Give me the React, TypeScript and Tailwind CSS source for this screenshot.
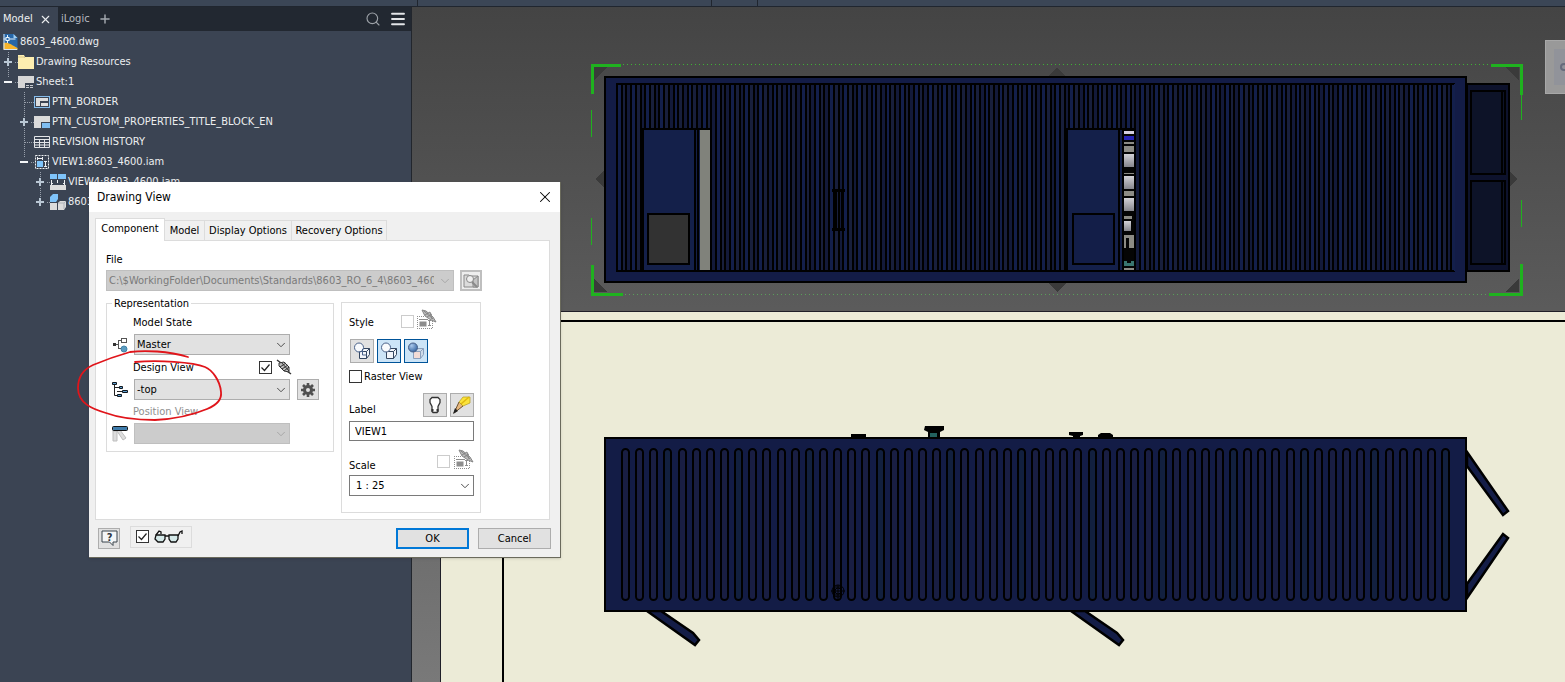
import React from "react";
import { ChevronDown, Menu, Plus, Search, X } from "lucide-react";

type TreeNode = {
  label: string;
  level: 0 | 1 | 2 | 3;
  icon: React.ReactNode;
  mark?: "plus" | "minus";
  last?: boolean;
};

const DwgIcon = () => (
  <svg width="15" height="16" viewBox="0 0 14 16">
    <path d="M0 0h10l4 4v12H0z" fill="#2767a8" />
    <path d="M10 0l4 4h-4z" fill="#9fd0f5" />
    <path d="M0 9c5-1 8 2 14 5v2H0z" fill="#f7b52c" />
    <path d="M4 1v8M0 5h12" stroke="#e8f3fc" />
    <rect x="2.500" y="3.500" width="3" height="3" fill="#2767a8" stroke="#e8f3fc" />
    <path d="M.5 0v15.500H13.500" fill="none" stroke="#d8e6f2" />
  </svg>
);

const FolderIcon = () => (
  <svg width="16" height="16" viewBox="0 0 16 16">
    <path d="M0 1h6l1 2h9v12H0z" fill="#fdeeb0" />
    <path d="M0 3h6l1 1" fill="none" stroke="#d9c98a" />
  </svg>
);

const SheetIcon = () => (
  <svg width="16" height="16" viewBox="0 0 16 16">
    <path d="M0 2h16v7H7v5H0z" fill="#d6d6d6" />
    <path d="M8 11.500h8M8 13.500h8" stroke="#c9ccd1" strokeDasharray="3 1" />
  </svg>
);

const BorderIcon = () => (
  <svg width="16" height="16" viewBox="0 0 16 16">
    <rect x=".5" y="2.500" width="15" height="11" fill="none" stroke="#86bdec" />
    <path d="M2 4h12v3H6v5H2z" fill="#dedede" />
    <rect x="7" y="9" width="7" height="3" fill="#dedede" />
  </svg>
);

const TitleBlockIcon = () => (
  <svg width="16" height="16" viewBox="0 0 16 16">
    <path d="M0 2h16v6H7v6H0z" fill="#dadada" />
    <rect x="8" y="9" width="8" height="5" fill="#7fbdf0" />
  </svg>
);

const TableIcon = () => (
  <svg width="16" height="16" viewBox="0 0 16 16" fill="none" stroke="#e3e5e8">
    <path d="M.5 2.500h15v11H.5zM0 5.500h16M0 8.500h16M0 11h16M5.500 5v9M10.500 5v9" />
  </svg>
);

const BaseViewIcon = () => (
  <svg width="16" height="16" viewBox="0 0 16 16">
    <rect x="1.500" y="1.500" width="13" height="13" fill="none" stroke="#eef0f2" strokeDasharray="2 1" />
    <rect x="3" y="7" width="6" height="6" fill="#7fc4fa" />
    <path d="M3 4.500h6M3.500 3v3M8.500 3v3M11.500 7v6M10 7.500h3M10 12.500h3" stroke="#eef0f2" />
  </svg>
);

const ProjectedViewIcon = () => (
  <svg width="16" height="16" viewBox="0 0 16 16">
    <path d="M0 0h7v5H0zM8 0h8v5H8z" fill="#7fc4fa" />
    <path d="M1.500 6v5M14.500 6v5M7.500 6v3M1 9.500h2M13 9.500h2" stroke="#eef0f2" />
    <rect x="0" y="11" width="16" height="5" fill="#dcdcdc" />
  </svg>
);

const AssemblyIcon = () => (
  <svg width="16" height="16" viewBox="0 0 16 16">
    <path d="M0 3l3-3h5v5L6 8H0z" fill="#7fc4fa" />
    <path d="M0 9h7v7H0zM8 9l2-2h6v6l-2 3H8z" fill="#dcdcdc" />
    <path d="M8 9h6v6M14 9l2-2" fill="none" stroke="#aeb2b8" />
  </svg>
);

const tree: TreeNode[] = [
  { label: "8603_4600.dwg", level: 0, icon: <DwgIcon /> },
  { label: "Drawing Resources", level: 1, icon: <FolderIcon />, mark: "plus" },
  { label: "Sheet:1", level: 1, icon: <SheetIcon />, mark: "minus", last: true },
  { label: "PTN_BORDER", level: 2, icon: <BorderIcon /> },
  { label: "PTN_CUSTOM_PROPERTIES_TITLE_BLOCK_EN", level: 2, icon: <TitleBlockIcon />, mark: "plus" },
  { label: "REVISION HISTORY", level: 2, icon: <TableIcon /> },
  { label: "VIEW1:8603_4600.iam", level: 2, icon: <BaseViewIcon />, mark: "minus", last: true },
  { label: "VIEW4:8603_4600.iam", level: 3, icon: <ProjectedViewIcon />, mark: "plus" },
  { label: "8603", level: 3, icon: <AssemblyIcon />, mark: "plus", last: true },
];

const indents = ["pl-[3px]", "pl-0", "pl-4", "pl-8"];

const Gutter = ({ mark, last }: { mark?: "plus" | "minus"; last?: boolean }) => (
  <svg width="18" height="20" viewBox="0 0 18 20" className="shrink-0">
    <path d={last ? "M8.500 0v10" : "M8.500 0v20"} stroke="#98a0ab" strokeDasharray="1 1" />
    <path d="M9 10.500h9" stroke="#98a0ab" strokeDasharray="1 1" />
    {mark && <rect x="3" y="5" width="11" height="10" fill="#3b4453" />}
    {mark && <path d="M4 10h8" stroke={mark === "plus" ? "#b9c7d4" : "#f4f6f8"} strokeWidth="2" />}
    {mark === "plus" && <path d="M8 6v8" stroke="#b9c7d4" strokeWidth="2" />}
  </svg>
);

const ModelBrowser = () => (
  <aside className="flex w-[412px] shrink-0 flex-col border-r border-[#22262d] bg-[#3b4453] text-[#eceef0]">
    <div className="flex h-6 items-center bg-[#222831]">
      <div className="flex h-full w-[58px] items-center justify-between bg-[#3b4453] pl-[3px] pr-1.5">
        <button className="pt-px">Model</button>
        <button aria-label="Close Model">
          <X size={13} strokeWidth={2} />
        </button>
      </div>
      <button className="pl-[3px] pt-px text-[#b6bac0]">iLogic</button>
      <button aria-label="Add tab" className="ml-2 text-[#a4a9b0]">
        <Plus size={14} strokeWidth={2.5} />
      </button>
      <div className="ml-auto flex items-center gap-2 pr-1">
        <button aria-label="Search" className="text-[#9da2a8]">
          <Search size={16} strokeWidth={1.7} />
        </button>
        <button aria-label="Menu" className="text-[#e2e4e7]">
          <Menu size={18} strokeWidth={2.5} />
        </button>
      </div>
    </div>
    <ul className="pt-px">
      {tree.map((node) => (
        <li key={node.label + node.level} className={`flex h-5 items-center whitespace-nowrap ${indents[node.level]}`}>
          {node.level > 0 && <Gutter mark={node.mark} last={node.last} />}
          {node.icon}
          <span className="pl-0.5 pt-px">{node.label}</span>
        </li>
      ))}
    </ul>
  </aside>
);

// 59 corrugations on the roof, three edge lines per corrugation on the side
const PITCH = 14.14;
const slots = Array.from({ length: 59 }, (_, i) => Math.round(622 + i * PITCH));
const ribs = Array.from({ length: 178 }, (_, i) => Math.round(617 + i * (PITCH / 3)));

const SideView = () => (
  <g shapeRendering="crispEdges">
    <g fill="#3a3a3a">
      <path d="M595 179l10-9v18zM1517 179l-8-8v16zM1057 68l9 8h-18zM1057 292l9-9h-18z" />
      <path d="M594 67h14l-14 13zM1519 67h-14l14 13zM594 292h14l-14-13zM1519 292h-14l14-13z" />
    </g>
    <g stroke="#000" strokeWidth="2">
      <rect x="1467" y="84" width="42" height="187" fill="#0d122c" />
      <rect x="1471" y="91" width="34" height="83" fill="#0d1328" />
      <rect x="1471" y="181" width="34" height="83" fill="#0d1328" />
      <path d="M1502 91v83M1502 181v83" />
      <rect x="605" y="77" width="861" height="205" fill="#131c46" />
      <rect x="617" y="84" width="837" height="187" fill="#151d40" />
    </g>
    {ribs.map((x, i) => (
      <g key={x}>
        <rect x={x} y="84" width="4" height="187" fill={i % 3 === 0 ? "#131f4b" : i % 3 === 1 ? "#181f3c" : "#131a3a"} />
        <rect x={x - 1} y="84" width="2" height="187" fill="#000" />
      </g>
    ))}
    <g stroke="#000" strokeWidth="2">
      <rect x="643" y="129" width="68" height="142" fill="#14204a" />
      <rect x="700" y="130" width="10" height="140" fill="#80827b" stroke="none" />
      <path d="M695 129v142M698 129v142" />
      <rect x="648" y="214" width="41" height="50" fill="#323232" />
      <rect x="1067" y="129" width="68" height="142" fill="#14204a" />
      <rect x="1073" y="214" width="41" height="50" fill="#131e48" />
      <path d="M1119 129v142" />
      <rect x="1123" y="130" width="12" height="140" fill="#050505" />
      <path d="M617 84h837M617 271h837" />
    </g>
    <rect x="1124" y="131" width="10" height="3" fill="#d3cfe0" />
    <rect x="1124" y="136" width="10" height="4" fill="#2524b5" />
    <path d="M1124 142h10v2h-10zM1124 146h10v6h-10zM1124 191h10v5h-10zM1124 216h8v3h-8zM1124 235h10v3h-10zM1124 238h2v10h-2zM1129 238h5v10h-5zM1124 268h10v2h-10z" fill="#8c8b85" />
    <g fill="url(#steel)">
      <rect x="1124" y="154" width="10" height="13" />
      <rect x="1124" y="176" width="10" height="13" />
      <rect x="1124" y="198" width="10" height="13" />
      <rect x="1124" y="221" width="7" height="10" />
    </g>
    <path d="M1124 173h10v1h-10z" fill="#8c8b85" />
    <path d="M1124 261h3v2h4v-2h3v5h-10z" fill="#39756f" />
    <path d="M832 190h13M832 229h13" stroke="#000" strokeWidth="3" />
    <path d="M836 190v40M839 190v40M842 190v40" stroke="#000" strokeWidth="2" />
    <path d="M592 94V65h29M1491 65h30v30M592 265v29h31M1489 294h32v-30" fill="none" stroke="#1fb21f" strokeWidth="3" />
    <path d="M591 110h1v27h-1zM591 218h1v27h-1zM1521 95h1v25h-1zM1521 200h1v27h-1z" fill="#1fb21f" />
    <path d="M623 64.500h868" strokeDasharray="1 3" stroke="#3fb335" />
    <path d="M625 294.500h864" strokeDasharray="1 3" stroke="#5aa05a" />
  </g>
);

const RoofView = () => (
  <g>
    <g fill="#000">
      <path d="M851 434h15v4h-15zM925 426h19v4l-4 2v6h-12v-6l-4-2zM1069 432h14v3l-3 1v2h-7v-2l-4-1zM1101 433h9l3 2v3h-15v-3z" />
    </g>
    <rect x="930" y="433" width="7" height="4" fill="#22615e" />
    <g fill="#141d47" stroke="#000" strokeWidth="2.500">
      <path d="M1467 452l41 59-5 4-36-49zM1467 598l41-60-5-4-36 50z" />
      <path d="M647 611l48 34 4-5-6-7-32-22zM1071 611l48 34 4-5-6-7-32-22z" />
    </g>
    <rect x="605" y="438" width="861" height="173" fill="#131c46" stroke="#000" strokeWidth="2" shapeRendering="crispEdges" />
    {slots.map((x, i) => (
      <rect
        key={x}
        x={x}
        y="449"
        width="7"
        height="151"
        rx="3.500"
        fill={i % 5 === 3 ? "#12203f" : "#191e43"}
        stroke="#000"
        strokeWidth="2"
      />
    ))}
    <g fill="none" stroke="#000">
      <circle cx="838" cy="591" r="6" />
      <circle cx="838" cy="591" r="3" />
      <path d="M831 591h14M838 585v15M834 587h8M834 595h8" />
    </g>
  </g>
);

const DrawingCanvas = () => (
  <main className="relative flex-1 overflow-hidden bg-linear-to-b from-[#444444] to-[#797979]">
    <svg className="block h-full w-full" role="img" aria-label="Drawing sheet">
      <defs>
        <linearGradient id="steel" x1="0" y1="0" x2="0" y2="1">
          <stop offset="0" stopColor="#d2d1d6" />
          <stop offset="1" stopColor="#85858c" />
        </linearGradient>
      </defs>
      <g transform="translate(-412 -7)">
        <rect x="440" y="311" width="4000" height="3000" fill="#1f1f28" />
        <rect x="441" y="312" width="4000" height="3000" fill="#ecebd7" />
        <path d="M503 3000V321h4000" fill="none" stroke="#000" strokeWidth="2" />
        <SideView />
        <RoofView />
      </g>
    </svg>
    <div className="absolute right-0 top-[33px] flex h-[54px] w-5 items-center justify-end border border-r-0 border-[#a8a8a8] bg-[#999999] py-2 pl-2">
      <div className="flex h-full w-full items-center justify-end overflow-hidden bg-[#91939a]">
        <svg width="5" height="10" viewBox="0 0 5 10">
          <circle cx="4" cy="5" r="3" fill="none" stroke="#666b7c" strokeWidth="2" />
        </svg>
      </div>
    </div>
  </main>
);

type CheckProps = { label: string; checked?: boolean; disabled?: boolean };

const CheckBox = ({ label, checked, disabled }: CheckProps) => (
  <span className="grid size-[13px] shrink-0">
    <input
      type="checkbox"
      aria-label={label}
      defaultChecked={checked}
      disabled={disabled}
      className="peer size-[13px] appearance-none border border-[#333333] bg-white [grid-area:1/1] disabled:border-[#cccccc]"
    />
    <svg
      viewBox="0 0 13 13"
      className="pointer-events-none invisible size-[13px] [grid-area:1/1] peer-checked:visible"
      fill="none"
      stroke="#222222"
      strokeWidth="1.200"
    >
      <path d="M2.500 6.500l3 3 5-6" />
    </svg>
  </span>
);

type ComboProps = { id: string; value: string; disabled?: boolean; light?: boolean; label?: string };

const ComboBox = ({ id, value, disabled, light, label }: ComboProps) => (
  <div className="grid h-[21px] min-w-0 flex-1 items-center">
    <select
      id={id}
      aria-label={label}
      disabled={disabled}
      className={`h-full w-full min-w-0 appearance-none overflow-hidden border pr-[19px] pt-px [grid-area:1/1] disabled:border-[#bfbfbf] disabled:bg-[#cccccc] disabled:text-[#7a7a7a] disabled:opacity-100 ${
        light ? "border-[#7a7a7a] bg-white pl-1.5" : "border-[#adadad] bg-[#e1e1e1] pl-0.5"
      }`}
    >
      <option>{value}</option>
    </select>
    <ChevronDown
      size={14}
      strokeWidth={1.6}
      className={`pointer-events-none mr-0.5 justify-self-end [grid-area:1/1] ${disabled ? "text-[#a5a5a5]" : "text-[#444444]"}`}
    />
  </div>
);

const LinkIcon = () => (
  <svg width="16" height="16" viewBox="0 0 16 16" fill="none" stroke="#333333">
    <path d="M1 1l4 3M11 12l4 3" strokeWidth="1.500" />
    <path d="M3 4l5-1 5 5v5l-5-1-5-5z" fill="#bdbdbd" />
    <path d="M4 8l6-4M6 10l6-4M8 12l5-4M5 3l8 9" />
  </svg>
);

const InheritIcon = () => (
  <svg width="20" height="20" viewBox="0 0 20 20" fill="none" stroke="#8d8d8d">
    <path d="M.5 7v13M0 7.500h7M0 19.500h16M15.500 12v8" strokeDasharray="1 1" />
    <rect x="3" y="13" width="6" height="4" fill="#8d8d8d" />
    <path d="M2 10.500h9M12.500 11v6M11 11.500h3M11 16.500h3" />
    <path d="M5 1l4 1 7 6 3 5-5-2-6-4z" fill="#bcbcbc" stroke="#858585" />
    <path d="M8 6l5-3M10 8l5-3M7 2l9 8M13 3l2 7" stroke="#858585" />
  </svg>
);

const ModelStateIcon = () => (
  <svg width="16" height="16" viewBox="0 0 16 16" fill="none" stroke="#555555">
    <path d="M1 7.500h5M6.500 3v9M6 3.500h3M6 11.500h3" />
    <rect x="1" y="6" width="3" height="3" fill="#333333" stroke="none" />
    <rect x="9.500" y="1.500" width="5" height="4" />
    <circle cx="12" cy="12" r="3" fill="#5a9bc0" stroke="#4384aa" />
  </svg>
);

const DesignViewIcon = () => (
  <svg width="16" height="16" viewBox="0 0 16 16">
    <path d="M2.500 2v11.500H5M3 5.500h4M5 9.500h6" fill="none" stroke="#222222" />
    <g fill="#5f9fd0" stroke="#101820">
      <path d="M.5.500h4v2h-4zM7.500 4.500h3v2h-3zM10.500 8.500h5v2h-5zM5.500 12.500h4v2h-4z" />
    </g>
  </svg>
);

const PositionIcon = () => (
  <svg width="16" height="16" viewBox="0 0 16 16">
    <path d="M1 5h4v10H1zM5 5l3-1 6 8-3 2z" fill="#dddddd" stroke="#bdbdbd" />
    <rect x=".5" y=".5" width="15" height="4" rx="1" fill="#3f7cab" stroke="#111111" />
  </svg>
);

const GearIcon = () => (
  <svg width="14" height="14" viewBox="0 0 14 14" fill="none" stroke="currentColor">
    <circle cx="7" cy="7" r="3.500" strokeWidth="3" />
    <path d="M7 0v3M7 11v3M0 7h3M11 7h3M2 2l2 2M10 10l2 2M2 12l2-2M10 4l2-2" strokeWidth="2.600" />
  </svg>
);

const StyleIcon = ({ kind }: { kind: "hidden" | "removed" | "shaded" }) => (
  <svg width="18" height="18" viewBox="0 0 18 18" fill="none" stroke="#33455f">
    <defs>
      <radialGradient id="ball" cx=".35" cy=".3" r=".8">
        <stop offset="0" stopColor="#a9c8ec" />
        <stop offset="1" stopColor="#2c5c99" />
      </radialGradient>
    </defs>
    <path d="M6.500 9.500l3-3h7v6l-3 4h-7z" fill={kind === "shaded" ? "#cfdbe9" : "#f2f5fa"} stroke={kind === "shaded" ? "#8ba0bd" : "#33455f"} />
    <path d="M6.500 9.500h7v7M13.500 9.500l3-3" stroke={kind === "shaded" ? "#8ba0bd" : "#33455f"} />
    {kind === "shaded" && <rect x="7" y="10" width="6" height="6" fill="#f3dcd6" stroke="none" />}
    <circle cx="6" cy="5.500" r="4.500" fill={kind === "shaded" ? "url(#ball)" : "#f8fafd"} stroke="#4a628a" />
    {kind === "hidden" && <path d="M6.500 9.500h4M9.500 7v6h4" stroke="#4a628a" />}
  </svg>
);

const BulbIcon = () => (
  <svg width="14" height="18" viewBox="0 0 14 18" fill="#ffffff" stroke="#333333" strokeWidth="1.300">
    <path d="M4 1.500h6l2 2v3l-2 4v5l-1 1H5l-1-1v-5l-2-4v-3z" />
    <path d="M4.500 13v2.500M9.500 13v2.500" strokeWidth="2" />
  </svg>
);

const PencilIcon = () => (
  <svg width="18" height="18" viewBox="0 0 18 18">
    <path d="M1 17L6 6l4 4z" fill="#e7b77e" stroke="#6d5230" />
    <path d="M6 6l4-5h7v6l-7 3z" fill="#fbe33a" stroke="#b59b1d" strokeWidth=".7" />
    <path d="M8 8l8-7" stroke="#e0b80e" strokeWidth="1.500" />
    <path d="M0 18l2-6 3 3z" fill="#222222" />
  </svg>
);

const GlassesIcon = () => (
  <svg width="30" height="16" viewBox="0 0 30 16" fill="#d4e8e8" stroke="#111111" strokeWidth="1.300">
    <path d="M2 6h9v4l-2 3H4l-3-3zM15 6h9v4l-2 3h-5l-2-3z" />
    <path d="M11 7h4M2 6l3-4 2 1v2M24 7l2-4 2-1v3" fill="none" />
  </svg>
);

const HelpIcon = () => (
  <svg width="17" height="17" viewBox="0 0 17 17">
    <path d="M1 1h15v11h-4v3.500L8.500 12H1z" fill="#f4f6f7" stroke="#3a444d" />
    <text x="8.500" y="10.500" textAnchor="middle" fontSize="11" fontWeight="bold" fill="#2d3741">?</text>
  </svg>
);

const BrowseIcon = () => (
  <svg width="17" height="16" viewBox="0 0 17 16" fill="#dcdcdc" stroke="#8a8a8a">
    <path d="M1 2h5l1 1h8v11H1z" />
    <path d="M10 7l5-4v11h-5z" fill="#c4c4c4" />
    <circle cx="7" cy="6" r="3.500" fill="#f0f0f0" />
    <path d="M9 9l5 5" strokeWidth="2" />
  </svg>
);

const toolButton = "flex size-6 items-center justify-center border";
const plainTool = "border-[#adadad] bg-[#e1e1e1]";
const activeTool = "border-[#005499] bg-[#cce4f7]";

const Representation = () => (
  <fieldset className="h-[155px] w-[228px] border border-[#dcdcdc] pl-[5px]">
    <legend className="h-3 px-0.5 leading-[14px]">Representation</legend>
    <div className="flex flex-col">
      <label htmlFor="model-state" className="ml-[21px] h-5 pt-1 leading-5">Model State</label>
      <div className="mt-[5px] flex w-[178px] items-center gap-1.5">
        <ModelStateIcon />
        <ComboBox id="model-state" value="Master" />
      </div>
      <div className="ml-[21px] flex h-6 w-[159px] items-center gap-1">
        <label htmlFor="design-view" className="mr-auto pt-0.5">Design View</label>
        <CheckBox label="Associative" checked />
        <LinkIcon />
      </div>
      <div className="flex items-center">
        <div className="flex w-[178px] items-center gap-1.5">
          <DesignViewIcon />
          <ComboBox id="design-view" value="-top" />
        </div>
        <button aria-label="View settings" className="ml-[7px] flex h-[21px] w-[22px] items-center justify-center border border-[#adadad] bg-[#e1e1e1] text-[#505050]">
          <GearIcon />
        </button>
      </div>
      <label htmlFor="position-view" className="ml-[21px] h-[23px] leading-6 text-[#8f8f8f]">Position View</label>
      <div className="flex w-[178px] items-center gap-1.5">
        <PositionIcon />
        <ComboBox id="position-view" value="" disabled />
      </div>
    </div>
  </fieldset>
);

const StylePanel = () => (
  <section className="mt-[5px] flex h-[211px] w-[140px] flex-col border border-[#dcdcdc] pl-[7px] pr-1.5">
    <div className="flex h-9 items-center">
      <span className="mr-auto pt-1">Style</span>
      <CheckBox label="Style from base" disabled />
      <span className="-mt-1 ml-[3px] mr-[37px]">
        <InheritIcon />
      </span>
    </div>
    <div className="flex gap-[3px] pl-px">
      <button aria-label="Hidden line" className={`${toolButton} ${plainTool}`}><StyleIcon kind="hidden" /></button>
      <button aria-label="Hidden line removed" className={`${toolButton} ${activeTool}`}><StyleIcon kind="removed" /></button>
      <button aria-label="Shaded" className={`${toolButton} ${activeTool}`}><StyleIcon kind="shaded" /></button>
    </div>
    <label className="mt-1.5 flex items-center gap-0.5 leading-[14px]">
      <CheckBox label="Raster View" />
      <span className="pt-px">Raster View</span>
    </label>
    <div className="mt-2 flex h-[26px] items-center gap-[3px]">
      <label htmlFor="view-label" className="mr-auto pt-2.5">Label</label>
      <button aria-label="Toggle label" className={`${toolButton} ${plainTool}`}><BulbIcon /></button>
      <button aria-label="Edit label" className={`${toolButton} ${plainTool}`}><PencilIcon /></button>
    </div>
    <input
      id="view-label"
      defaultValue="VIEW1"
      className="mt-[3px] h-5 w-full min-w-0 border border-[#7a7a7a] bg-white px-[5px] pt-px"
    />
    <div className="mt-1.5 flex h-7 items-center">
      <label htmlFor="scale" className="mr-auto pt-2.5">Scale</label>
      <CheckBox label="Scale from base" disabled />
      <span className="-mt-1 ml-1">
        <InheritIcon />
      </span>
    </div>
    <div className="flex">
      <ComboBox id="scale" value="1 : 25" light />
    </div>
  </section>
);

const DrawingViewDialog = () => (
  <div
    role="dialog"
    aria-label="Drawing View"
    className="absolute left-[89px] top-[182px] w-[472px] border-b border-r border-[#6a6a5c] bg-[#f0f0f0] text-black shadow-sm"
  >
    <header className="flex h-[30px] items-center justify-between bg-white pl-2 pr-1.5">
      <h1 className="text-[12px]">Drawing View</h1>
      <button aria-label="Close">
        <X size={18} strokeWidth={1.400} />
      </button>
    </header>
    <div className="pl-1.5 pr-2.5 pt-1.5">
      <div role="tablist" className="flex items-end">
        <button role="tab" aria-selected="true" className="z-10 -mb-px h-[23px] w-[70px] border border-b-0 border-[#dcdcdc] bg-white pb-0.5">Component</button>
        <button role="tab" className="h-5 w-[39px] border-t border-[#dcdcdc] pt-0.5">Model</button>
        <button role="tab" className="h-5 w-[87px] whitespace-nowrap border-l border-t border-[#dcdcdc] pt-0.5">Display Options</button>
        <button role="tab" className="h-5 w-24 whitespace-nowrap border border-b-0 border-[#dcdcdc] pt-0.5">Recovery Options</button>
      </div>
      <div className="h-[280px] border border-[#dcdcdc] bg-white pl-2.5 pt-2.5">
        <label htmlFor="file" className="block h-[19px] leading-[18px]">File</label>
        <div className="flex items-center gap-1.5">
          <div className="flex w-[348px]">
            <ComboBox id="file" value="C:\$WorkingFolder\Documents\Standards\8603_RO_6_4\8603_4600.iam" disabled />
          </div>
          <button aria-label="Browse" disabled className="flex h-[21px] w-[22px] items-center justify-center border-2 border-[#bfbfbf] bg-[#eeeeee]">
            <BrowseIcon />
          </button>
        </div>
        <div className="mt-1.5 flex gap-[7px]">
          <Representation />
          <StylePanel />
        </div>
      </div>
    </div>
    <footer className="flex h-[37px] items-center pl-[9px] pr-[9px]">
      <button aria-label="Help" className="flex h-[21px] w-[22px] items-center justify-center border border-[#adadad] bg-[#e1e1e1]">
        <HelpIcon />
      </button>
      <div className="-mt-1 ml-2.5 flex h-[22px] w-[62px] items-center gap-[5px] border border-[#dcdcdc] pl-[5px]">
        <CheckBox label="Preview" checked />
        <GlassesIcon />
      </div>
      <button className="ml-auto h-[21px] w-[73px] border-2 border-[#0078d7] bg-[#e1e1e1] pt-px leading-4">OK</button>
      <button className="ml-[9px] h-[21px] w-[73px] border border-[#adadad] bg-[#e1e1e1] pt-px leading-4">Cancel</button>
    </footer>
  </div>
);

// hand drawn marker around the Design View setting
const RedMarker = () => (
  <svg width="160" height="80" viewBox="70 345 160 80" className="pointer-events-none absolute left-[70px] top-[345px]" fill="none" stroke="#e0151b" strokeWidth="1.800" strokeLinecap="round">
    <path d="M188 357C168 351 145 350 130 352C116 356 105 360 93 365C82 370 78 378 78 388C78 403 92 409 106 413C122 419 140 420 155 420C175 419 195 414 207 409C217 405 222 400 221 392C220 380 212 370 205 367C193 362 158 360 135 362" />
  </svg>
);

const App = () => {
  return (
    <div className="relative flex h-screen min-h-[600px] flex-col overflow-hidden bg-[#3b4453] font-['DejaVu_Sans_Condensed','DejaVu_Sans',sans-serif] text-[11px]">
      <div className="flex h-[7px] shrink-0 border-b border-[#20262f] bg-[#3b4656]">
        <div className="w-[418px] border-r border-[#20262f]" />
        <div className="w-[294px] border-r border-[#20262f]" />
        <div className="w-[46px] border-r border-[#20262f]" />
      </div>
      <div className="flex min-h-0 flex-1">
        <ModelBrowser />
        <DrawingCanvas />
      </div>
      <DrawingViewDialog />
      <RedMarker />
    </div>
  );
};

export default App;
